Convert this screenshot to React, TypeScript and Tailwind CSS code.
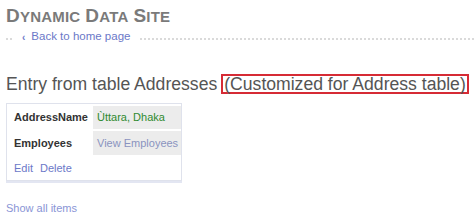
import React from "react";

function Caps({ big, rest }: { big: string; rest: string }) {
  return (
    <span>
      <span className="text-[19px]">{big}</span>
      <span className="text-[15px]">{rest}</span>
    </span>
  );
}

function App() {
  return (
    <div className="w-[474px] h-[219px] bg-white overflow-hidden px-[6px] pt-[5px] font-['Liberation_Sans',sans-serif]">
      <h1 className="leading-[22px] h-[22px] font-bold text-[#7a7a7a] flex items-baseline gap-[5px] tracking-[0.2px]">
        <Caps big="D" rest="YNAMIC" />
        <Caps big="D" rest="ATA" />
        <Caps big="S" rest="ITE" />
      </h1>
      <div className="flex items-center h-[16px] mt-[2px]">
        <span className="w-[6px] border-b-2 border-dotted border-[#dadada] mr-[10px] mt-[3px]" />
        <span className="text-[#6b78c8] text-[10px] mr-[6px] font-bold">&lsaquo;</span>
        <a className="text-[11.5px] text-[#6b78c8] whitespace-nowrap">Back to home page</a>
        <span className="flex-1 ml-[10px] border-b-2 border-dotted border-[#dadada] -mr-[6px] mt-[3px]" />
      </div>
      <h2 className="mt-[29px] text-[17.6px] leading-[20px] text-[#555] flex items-center whitespace-nowrap">
        <span>Entry from table Addresses</span>
        <span className="ml-[4px] border-2 border-[#d62b35] px-[1px] leading-[16px]">
          (Customized for Address table)
        </span>
      </h2>
      <div className="mt-[9px] w-[176px] border border-[#dfe2ec] shadow-[0_2px_0_#e3e6f2] px-[3px] pt-[2px] pb-[5px] text-[11px]">
        <div className="grid grid-cols-[83px_88px] gap-y-[2px] whitespace-nowrap">
          <div className="h-[23px] flex items-center font-bold text-[#333] pl-[4px]">AddressName</div>
          <div className="h-[23px] flex items-center bg-[#ececec] text-[#2f8a2f] pl-[4px]">Ùttara, Dhaka</div>
          <div className="h-[24px] flex items-center font-bold text-[#333] pl-[4px]">Employees</div>
          <div className="h-[24px] flex items-center bg-[#ececec] text-[#8a93bf] pl-[4px]">View Employees</div>
        </div>
        <div className="text-[#6b78c8] mt-[7px] pl-[4px] flex gap-[7px] leading-[13px]">
          <a>Edit</a>
          <a>Delete</a>
        </div>
      </div>
      <div className="mt-[21px] text-[11px] leading-[13px] text-[#8a95d6]">
        <a>Show all items</a>
      </div>
    </div>
  );
}

export default App;
